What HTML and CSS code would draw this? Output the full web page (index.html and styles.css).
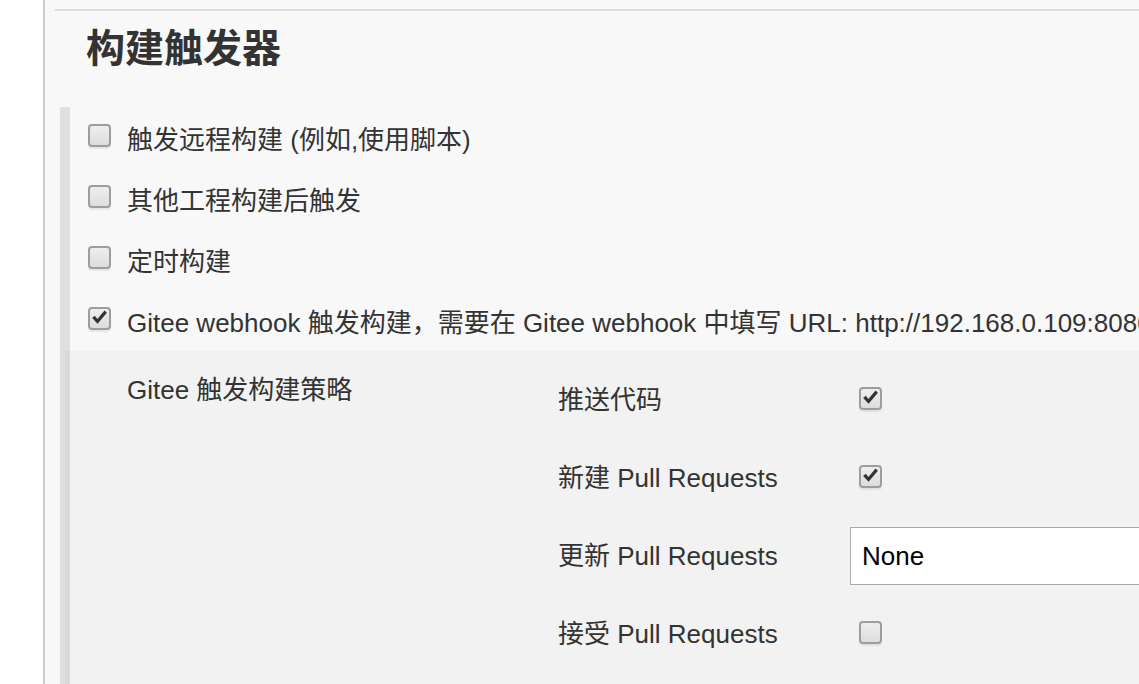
FILE: index.html
```html
<!DOCTYPE html>
<html lang="zh-CN">
<head>
<meta charset="utf-8">
<title>构建触发器</title>
<link rel="stylesheet" href="styles.css">
</head>
<body>
<div class="page">
  <div class="panel">
    <div class="rule"></div>
    <h2 class="section-title">构建触发器</h2>
    <div class="section">
      <div class="option"><span class="cb"></span><span class="label">触发远程构建 (例如,使用脚本)</span></div>
      <div class="option"><span class="cb"></span><span class="label">其他工程构建后触发</span></div>
      <div class="option"><span class="cb"></span><span class="label">定时构建</span></div>
      <div class="option"><span class="cb checked"><svg viewBox="0 0 22 22" width="19" height="19"><path d="M2.5 10.5 L5.5 7.8 L8.6 11.6 L16.8 1.8 L19.6 4.2 L8.8 17.2 Z" fill="#333"/></svg></span><span class="label">Gitee webhook 触发构建，需要在 Gitee webhook 中填写 URL: http://192.168.0.109:8080/gitee-project/demo</span></div>
      <div class="nested">
        <div class="nested-label">Gitee 触发构建策略</div>
        <div class="settings">
          <div class="setting-label">推送代码</div>
          <div class="setting-control"><span class="cb checked"><svg viewBox="0 0 22 22" width="19" height="19"><path d="M2.5 10.5 L5.5 7.8 L8.6 11.6 L16.8 1.8 L19.6 4.2 L8.8 17.2 Z" fill="#333"/></svg></span></div>
          <div class="setting-label">新建 Pull Requests</div>
          <div class="setting-control"><span class="cb checked"><svg viewBox="0 0 22 22" width="19" height="19"><path d="M2.5 10.5 L5.5 7.8 L8.6 11.6 L16.8 1.8 L19.6 4.2 L8.8 17.2 Z" fill="#333"/></svg></span></div>
          <div class="setting-label">更新 Pull Requests</div>
          <div class="setting-control"><div class="select">None</div></div>
          <div class="setting-label">接受 Pull Requests</div>
          <div class="setting-control"><span class="cb"></span></div>
        </div>
      </div>
    </div>
  </div>
</div>
</body>
</html>
```

FILE: styles.css
```css
html, body {
  margin: 0;
  height: 100%;
  overflow: hidden;
  background: #fff;
  font-family: "Liberation Sans", "Noto Sans CJK SC", sans-serif;
  color: #333;
}

.page {
  height: 100%;
  padding-left: 43px;
  box-sizing: border-box;
}

.panel {
  height: 100%;
  border-left: 2px solid #ccc;
  background: #f8f8f8;
  padding: 9px 0 0 10px;
  box-sizing: border-box;
  display: flex;
  flex-direction: column;
  overflow: hidden;
}

.rule {
  height: 2px;
  background: #ddd;
  flex: none;
}

.section-title {
  margin: 14px 0 0 31px;
  font-size: 39px;
  line-height: 48px;
  font-weight: bold;
  color: #333;
}

.section {
  margin: 34px 0 0 5px;
  border-left: 10px solid #e0e0e0;
  flex: 1;
  display: flex;
  flex-direction: column;
}

.option {
  display: flex;
  align-items: center;
  height: 61px;
  padding-left: 18px;
  gap: 16px;
  font-size: 26px;
  white-space: nowrap;
  flex: none;
}

.option .cb {
  margin-bottom: 5px;
}

.cb {
  width: 23px;
  height: 23px;
  box-sizing: border-box;
  border: 2px solid #9d9d9d;
  border-radius: 4px;
  background: linear-gradient(#eeeeee, #dddddd);
  box-shadow: 0 2px 1px rgba(0, 0, 0, 0.07);
  display: inline-flex;
  align-items: center;
  justify-content: center;
  flex: none;
}

.cb svg {
  display: block;
}

.nested {
  margin-left: -5px;
  border-left: 5px solid #d9d9d9;
  background: #f2f2f2;
  flex: 1;
  display: flex;
  font-size: 26px;
  white-space: nowrap;
}

.nested-label {
  width: 488px;
  padding-left: 57px;
  box-sizing: border-box;
  line-height: 78px;
  flex: none;
}

.settings {
  margin-top: 10px;
  display: grid;
  grid-template-columns: 292px 400px;
  grid-auto-rows: 78px;
  align-items: center;
  align-content: start;
}

.setting-label {
  padding-bottom: 6px;
}

.setting-control {
  display: flex;
  align-items: center;
}

.setting-control .cb {
  margin-left: 9px;
  margin-bottom: 4px;
}

.select {
  width: 400px;
  height: 58px;
  box-sizing: border-box;
  border: 1px solid #aaa;
  background: #fff;
  padding-left: 11px;
  display: flex;
  align-items: center;
  color: #000;
  font-size: 26px;
}
```
